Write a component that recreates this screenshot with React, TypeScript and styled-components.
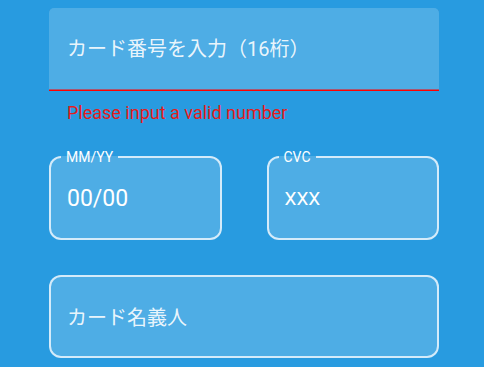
import React from "react";
import styled, { createGlobalStyle } from "styled-components";

const Global = createGlobalStyle`
  html, body {
    margin: 0;
    padding: 0;
    background: #289be0;
  }
  body {
    font-family: Roboto, "Noto Sans CJK JP", sans-serif;
  }
`;

const Page = styled.div`
  width: 484px;
  height: 367px;
  overflow: hidden;
  background: #289be0;
  box-sizing: border-box;
  padding: 8px 0 0 49px;
`;

const Form = styled.div`
  width: 390px;
  display: flex;
  flex-direction: column;
`;

const FilledField = styled.div`
  height: 83px;
  box-sizing: border-box;
  background: rgba(255, 255, 255, 0.18);
  border-radius: 5px 5px 0 0;
  box-shadow: inset 0 -1.5px 0 #ff0000;
  display: flex;
  align-items: center;
  padding: 0 0 4px 18px;
  font-size: 20px;
  color: rgba(255, 255, 255, 0.9);
`;

const ErrorText = styled.div`
  margin-top: 10px;
  line-height: 24px;
  height: 24px;
  padding-left: 18px;
  font-size: 18px;
  color: #e41b1b;
`;

const Row = styled.div`
  margin-top: 24px;
  display: grid;
  grid-template-columns: 1fr 1fr;
  gap: 45px;
`;

const Outlined = styled.fieldset`
  margin: 0;
  min-inline-size: 0;
  height: 91px;
  box-sizing: border-box;
  border: 2px solid rgba(235, 246, 253, 0.85);
  border-radius: 12px;
  background: rgba(255, 255, 255, 0.18);
  padding: 0 0 0 16px;
`;

const Legend = styled.legend`
  margin-left: -6px;
  padding: 0 5px;
  font-size: 14px;
  line-height: 16px;
  color: #ffffff;
`;

const Value = styled.div<{ $size: number }>`
  margin-top: 20px;
  line-height: 28px;
  font-size: ${(p) => p.$size}px;
  color: #ffffff;
`;

const NameBox = styled.div`
  margin-top: 35px;
  height: 83px;
  box-sizing: border-box;
  border: 2px solid rgba(235, 246, 253, 0.85);
  border-radius: 12px;
  background: rgba(255, 255, 255, 0.18);
  display: flex;
  align-items: center;
  padding: 0 0 0 16px;
  font-size: 20px;
  color: rgba(255, 255, 255, 0.9);
`;

export default function App() {
  return (
    <>
      <Global />
      <Page>
        <Form>
          <FilledField>カード番号を入力（16桁）</FilledField>
          <ErrorText>Please input a valid number</ErrorText>
          <Row>
            <Outlined>
              <Legend>MM/YY</Legend>
              <Value $size={23}>00/00</Value>
            </Outlined>
            <Outlined>
              <Legend>CVC</Legend>
              <Value $size={19}>XXX</Value>
            </Outlined>
          </Row>
          <NameBox>カード名義人</NameBox>
        </Form>
      </Page>
    </>
  );
}
